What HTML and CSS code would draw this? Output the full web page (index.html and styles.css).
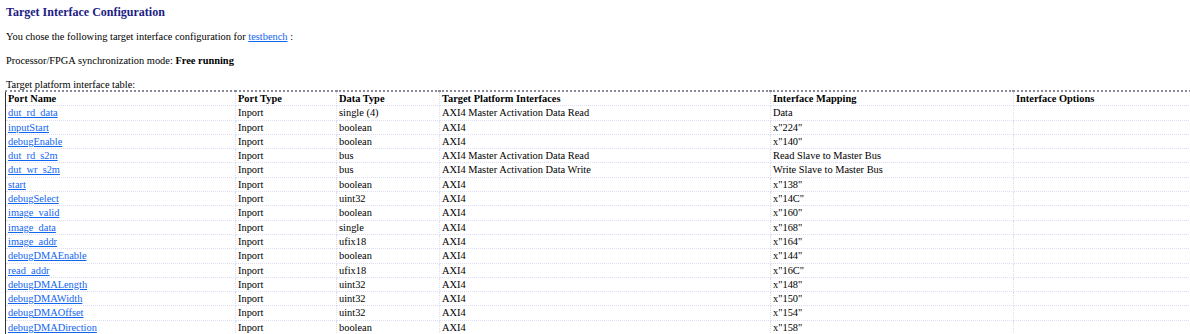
FILE: index.html
```html
<!DOCTYPE html>
<html>
<head>
<meta charset="utf-8">
<link rel="stylesheet" href="styles.css">
</head>
<body>
<h3 class="title">Target Interface Configuration</h3>
<p class="para">You chose the following target interface configuration for <a class="lnk" href="#">testbench</a> :</p>
<p class="para">Processor/FPGA synchronization mode: <b>Free running</b></p>
<div class="caption">Target platform interface table:</div>
<table class="itable">
<colgroup>
<col class="c1"><col class="c2"><col class="c3"><col class="c4"><col class="c5"><col class="c6">
</colgroup>
<tr class="head"><th>Port Name</th><th>Port Type</th><th>Data Type</th><th>Target Platform Interfaces</th><th>Interface Mapping</th><th>Interface Options</th></tr>
<tr><td><a class="lnk" href="#">dut_rd_data</a></td><td>Inport</td><td>single (4)</td><td>AXI4 Master Activation Data Read</td><td>Data</td><td></td></tr>
<tr><td><a class="lnk" href="#">inputStart</a></td><td>Inport</td><td>boolean</td><td>AXI4</td><td>x"224"</td><td></td></tr>
<tr><td><a class="lnk" href="#">debugEnable</a></td><td>Inport</td><td>boolean</td><td>AXI4</td><td>x"140"</td><td></td></tr>
<tr><td><a class="lnk" href="#">dut_rd_s2m</a></td><td>Inport</td><td>bus</td><td>AXI4 Master Activation Data Read</td><td>Read Slave to Master Bus</td><td></td></tr>
<tr><td><a class="lnk" href="#">dut_wr_s2m</a></td><td>Inport</td><td>bus</td><td>AXI4 Master Activation Data Write</td><td>Write Slave to Master Bus</td><td></td></tr>
<tr><td><a class="lnk" href="#">start</a></td><td>Inport</td><td>boolean</td><td>AXI4</td><td>x"138"</td><td></td></tr>
<tr><td><a class="lnk" href="#">debugSelect</a></td><td>Inport</td><td>uint32</td><td>AXI4</td><td>x"14C"</td><td></td></tr>
<tr><td><a class="lnk" href="#">image_valid</a></td><td>Inport</td><td>boolean</td><td>AXI4</td><td>x"160"</td><td></td></tr>
<tr><td><a class="lnk" href="#">image_data</a></td><td>Inport</td><td>single</td><td>AXI4</td><td>x"168"</td><td></td></tr>
<tr><td><a class="lnk" href="#">image_addr</a></td><td>Inport</td><td>ufix18</td><td>AXI4</td><td>x"164"</td><td></td></tr>
<tr><td><a class="lnk" href="#">debugDMAEnable</a></td><td>Inport</td><td>boolean</td><td>AXI4</td><td>x"144"</td><td></td></tr>
<tr><td><a class="lnk" href="#">read_addr</a></td><td>Inport</td><td>ufix18</td><td>AXI4</td><td>x"16C"</td><td></td></tr>
<tr><td><a class="lnk" href="#">debugDMALength</a></td><td>Inport</td><td>uint32</td><td>AXI4</td><td>x"148"</td><td></td></tr>
<tr><td><a class="lnk" href="#">debugDMAWidth</a></td><td>Inport</td><td>uint32</td><td>AXI4</td><td>x"150"</td><td></td></tr>
<tr><td><a class="lnk" href="#">debugDMAOffset</a></td><td>Inport</td><td>uint32</td><td>AXI4</td><td>x"154"</td><td></td></tr>
<tr><td><a class="lnk" href="#">debugDMADirection</a></td><td>Inport</td><td>boolean</td><td>AXI4</td><td>x"158"</td><td></td></tr>
</table>
</body>
</html>
```
FILE: styles.css
```css
html, body {
  margin: 0;
  padding: 0;
  background: #ffffff;
}
body {
  font-family: "Liberation Serif", "Times New Roman", serif;
  font-size: 10.4px;
  color: #000000;
  padding-left: 6px;
}
.title {
  margin: 0;
  padding-top: 4px;
  font-size: 12px;
  line-height: 16px;
  font-weight: bold;
  color: #1c1c84;
}
.para {
  margin: 11px 0 0 0;
  line-height: 12px;
}
.para + .para {
  margin-top: 12px;
}
.caption {
  margin-top: 12px;
  line-height: 11px;
}
.lnk {
  color: #1166f0;
  text-decoration: underline;
}
.itable {
  margin-left: -1px;
  width: 1185px;
  border-collapse: collapse;
  table-layout: fixed;
  border-top: 2px dotted #8a8a9a;
  border-left: 1px solid #333;
}
.c1 { width: 230px; }
.c2 { width: 101px; }
.c3 { width: 103px; }
.c4 { width: 331px; }
.c5 { width: 243px; }
.c6 { width: 177px; }
.itable th,
.itable td {
  text-align: left;
  padding: 0 0 0 2px;
  line-height: 13.3px;
  border-bottom: 1px dotted #dcdcf2;
  border-right: 1px dotted #dcdcf2;
  white-space: nowrap;
  overflow: hidden;
}
.itable th {
  font-weight: bold;
}
```
